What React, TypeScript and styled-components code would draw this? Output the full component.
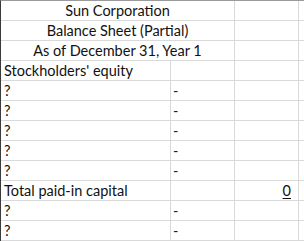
import styled, { createGlobalStyle } from 'styled-components';

const GlobalStyle = createGlobalStyle`
    html, body
    {
        margin: 0;
        padding: 0;
        background: #ffffff;
        overflow: hidden;
    }
`;

interface IRow
{
    label : string
    value? : string
    total? : string
    title? : boolean
}

const rows : Array<IRow> = [
    { label : "Sun Corporation", title : true },
    { label : "Balance Sheet (Partial)", title : true },
    { label : "As of December 31, Year 1", title : true },
    { label : "Stockholders' equity" },
    { label : "?", value : "-" },
    { label : "?", value : "-" },
    { label : "?", value : "-" },
    { label : "?", value : "-" },
    { label : "?", value : "-" },
    { label : "Total paid-in capital", total : "0" },
    { label : "?", value : "-" },
    { label : "?", value : "-" },
];

const App = () =>
{
    return (
        <>
            <GlobalStyle/>
            <Sheet>
                {rows.map((row, i) => row.title ? (
                    <Row key={i}>
                        <Cell span={2} align="center">{row.label}</Cell>
                        <Cell/>
                        <Cell/>
                    </Row>
                ) : (
                    <Row key={i}>
                        <Cell>{row.label}</Cell>
                        <Cell><Dash>{row.value}</Dash></Cell>
                        <Cell align="right">{row.total && <Total>{row.total}</Total>}</Cell>
                        <Cell/>
                    </Row>
                ))}
            </Sheet>
        </>
    );
};

const Sheet = styled.div`
    display: flex;
    flex-direction: column;
    width: 304px;
    height: 241px;
    box-sizing: border-box;
    overflow: hidden;
    border-top: 1px solid #9b9b9b;
    border-left: 1px solid #3a3a3a;
    font-family: "Lato", "Open Sans", sans-serif;
    font-size: 14.5px;
    color: #111111;
`;

const Row = styled.div`
    display: grid;
    grid-template-columns: 170px 64px 64px 1fr;
    height: 20px;
`;

const Cell = styled.div<{ span? : number, align? : string }>`
    grid-column: span ${props => props.span ?? 1};
    display: flex;
    align-items: flex-end;
    justify-content: ${props => props.align === "center" ? "center" : props.align === "right" ? "flex-end" : "flex-start"};
    height: 20px;
    box-sizing: border-box;
    padding: 0 3px 1px 3px;
    border-right: 1px solid #d9d9d9;
    border-bottom: 1px solid #d9d9d9;
    line-height: 17px;
    white-space: nowrap;
    overflow: hidden;
`;

const Dash = styled.span`
    margin-left: -1px;
    color: #1b1b50;
`;

const Total = styled.span`
    margin-right: 4px;
    text-decoration: underline;
    text-underline-offset: 2px;
`;

export default App;
